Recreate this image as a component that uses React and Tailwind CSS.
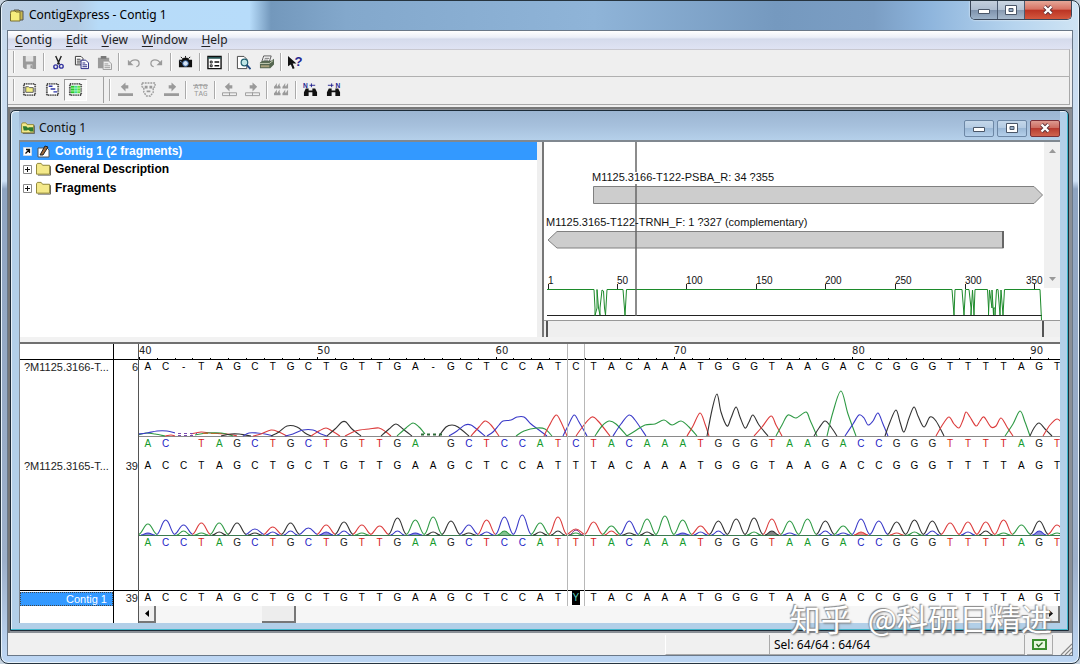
import React from "react";

const TAIL = "TACAAATGGGTAAGACCGGGTTTTAGT";
const READ_1 = "AC-TAGCTGCTGTTGA-GCTCCATC" + TAIL;
const READ_2 = "ACCTAGCTGCTGTTGAAGCTCCATT" + TAIL;
const CONSENSUS = "ACCTAGCTGCTGTTGAAGCTCCATY" + TAIL;

const STROKE = { A: "#2f9a45", C: "#3a3ac8", G: "#333333", T: "#dc3c3c" };
const TEXT_COLOR = {
  A: "text-[#149a2c]",
  C: "text-[#2222c4]",
  G: "text-[#222222]",
  T: "text-[#d42020]",
};

const TRACE_1 = [
  ["A", "139,435 147,433 156,434 166,436"],
  ["C", "139,434 148,433 158,431 168,431 176,433"],
  ["T", "166,436 172,435 176,436"],
  ["T", "192,434 202,432 212,433 228,434 238,436"],
  ["A", "196,435 208,433 222,433 234,436"],
  ["G", "222,436 232,434 240,434 246,435 252,436"],
  ["C", "244,436 250,433 258,433 266,434 274,436"],
  ["T", "254,436 262,434 272,430 280,432 288,436"],
  ["G", "272,436 280,432 288,426 298,427 306,433 312,436"],
  ["C", "286,436 294,434 304,430 314,430 322,434 328,436"],
  ["T", "312,436 320,431 327,428 333,431 341,436"],
  ["G", "328,436 336,429 343,422 347,422 353,429 362,436"],
  ["T", "346,436 354,432 361,430 370,429 380,428 387,432 392,436"],
  ["G", "382,436 390,429 397,424 404,429 413,436"],
  ["A", "398,436 407,428 414,423 420,427 426,434"],
  ["G", "440,436 447,427 453,425 459,427 470,436"],
  ["C", "450,436 458,431 466,425 472,425 480,431 486,436"],
  ["T", "472,436 480,427 486,421 492,425 500,436"],
  ["C", "488,436 494,432 500,425 504,421 512,420 518,417 525,417 532,424 540,430 548,436"],
  ["A", "517,436 525,431 538,428 546,429 553,436"],
  ["T", "545,436 550,426 557,415 562,422 568,436"],
  ["C", "564,436 569,426 575,415 580,422 588,436"],
  ["T", "577,436 585,425 593,417 599,421 611,436"],
  ["A", "596,436 603,426 610,421 617,424 628,436"],
  ["C", "614,436 622,424 630,415 636,420 647,436"],
  ["A", "628,436 636,431 646,425 656,424 665,420 673,425 682,421 690,427 698,436"],
  ["T", "688,436 694,426 701,413 706,424 710,436"],
  ["G", "708,436 713,410 718,394 722,412 728,426 732,418 737,407 741,417 746,428 750,422 754,415 760,425 769,436"],
  ["T", "755,436 763,427 772,416 777,425 783,436"],
  ["A", "777,436 783,425 789,415 797,418 807,412 811,420 818,436"],
  ["G", "815,436 820,428 826,421 832,427 838,436"],
  ["A", "828,436 834,412 842,391 849,414 857,436"],
  ["C", "846,436 854,424 860,415 865,418 869,425 874,421 879,413 884,424 889,436"],
  ["G", "886,436 891,422 897,410 901,422 905,432 910,418 915,407 919,416 925,427 931,417 937,421 945,436"],
  ["T", "937,436 944,424 950,417 955,424 960,428 964,420 967,412 971,417 977,426 981,421 985,417 992,427 997,426 1002,418 1008,427 1014,436"],
  ["A", "1006,436 1014,424 1021,411 1026,422 1031,436"],
  ["G", "1031,436 1035,428 1040,423 1046,429 1053,436"],
  ["T", "1044,436 1051,425 1058,419 1063,423"],
];

const HEIGHTS_2 = [
  11, 15, 10, 12, 12, 12, 6, 8, 12, 7, 10, 13, 10, 9, 17, 15, 18, 14, 10, 15, 18, 20, 12, 18, 6, 13,
  9, 14, 16, 19, 15, 9, 14, 16, 17, 16, 14, 16, 14, 9, 16, 14, 13, 15, 14, 12, 13, 13, 15, 10, 14, 10,
];

function smooth(text) {
  const p = text.split(" ").map((s) => s.split(",").map(Number));
  let d = `M${p[0][0]} ${p[0][1]}`;
  for (let i = 0; i < p.length - 1; i++) {
    const a = p[i - 1] || p[i];
    const b = p[i];
    const c = p[i + 1];
    const e = p[i + 2] || c;
    d += `C${b[0] + (c[0] - a[0]) / 6} ${b[1] + (c[1] - a[1]) / 6} ${c[0] - (e[0] - b[0]) / 6} ${c[1] - (e[1] - b[1]) / 6} ${c[0]} ${c[1]}`;
  }
  return d;
}

function bump(x, w, h) {
  return `M${x - w} 62C${x - w / 2} 62 ${x - w / 2} ${62 - h} ${x} ${62 - h}S${x + w / 2} 62 ${x + w} 62`;
}

const cells = "grid w-[927px] grid-cols-[repeat(52,minmax(0,1fr))] text-center";

function Bases({ seq, colored }) {
  return (
    <div className={`${cells} h-[14px] text-[10px] leading-[14px]`}>
      {seq.split("").map((b, i) => (
        <span key={i} className={colored ? TEXT_COLOR[b] : b === "Y" ? "mx-[5px] bg-black text-[#5fd0c0]" : "text-black"}>
          {colored && b === "-" ? "" : b}
        </span>
      ))}
    </div>
  );
}

function TraceOne() {
  return (
    <svg className="block h-[63px] w-[927px]" viewBox="140 374 927 63" fill="none">
      <path d="M139 436.5H1067" stroke="#8a8a8a" />
      {TRACE_1.map(([b, pts], i) => (
        <path key={i} d={smooth(pts)} stroke={STROKE[b]} strokeWidth="1.1" />
      ))}
      <path d="M179 433.5H198M179 435.5H194" stroke="#7a4ab0" strokeDasharray="3 3" />
      <path d="M204 433.5H222" stroke="#b0702a" strokeDasharray="5 3" />
      <path d="M422 434.500H444" stroke="#2f6a3a" strokeWidth="2" strokeDasharray="3 3" />
    </svg>
  );
}

function TraceTwo() {
  const order = ["A", "C", "G", "T"];
  return (
    <svg className="block h-[63px] w-[927px]" viewBox="0 0 927 63" fill="none">
      <path d="M0 62.500H927" stroke="#3c7a50" />
      {HEIGHTS_2.map((h, i) => {
        const x = ((i + 0.5) * 927) / 52;
        const base = READ_2[i];
        const other = order[(order.indexOf(base) + 1 + (i % 3)) % 4];
        return (
          <g key={i} strokeWidth="1.100">
            {i % 4 !== 1 && <path d={bump(x, 7, 2 + (i % 3))} stroke={STROKE[other]} fill={i % 5 === 0 ? STROKE[other] : "none"} fillOpacity="0.6" />}
            <path d={`M${x - 9} 61.500C${x - 5} 60 ${x - 4} ${62 - h} ${x} ${62 - h}S${x + 5} 60 ${x + 9} 61.500`} stroke={STROKE[base]} />
          </g>
        );
      })}
      <path d={bump(437, 7, 5)} stroke="#8a2a80" />
    </svg>
  );
}

function Ruler() {
  return (
    <div className={`${cells} h-4`}>
      {READ_1.split("").map((_, i) => (
        <div key={i} className="flex h-4 flex-col justify-between text-left font-['DejaVu_Sans',sans-serif] text-[10px] leading-[13px] text-[#222]">
          <span className="h-[13px] w-4">{i % 10 === 0 ? 40 + i : ""}</span>
          <span className={i % 10 === 0 ? "h-[3px] w-px bg-black" : "h-[2px] w-px bg-black"} />
        </div>
      ))}
    </div>
  );
}

function Overview() {
  const dips = "M547 289.500H594L595 308V315.500L597 308V289.500L598.500 308L600 315V308L602 290L603.500 291L604.500 308L605.500 315L607 289.500H623L625 315.500L626.500 289.500H952L954 315L955 289.500H962L964 315L965.500 289.500H969L971 308V315L972.500 290L974 315L975 289.500H987.500L988.500 308V315L989.500 290L992 308V290L993.500 315V308L995 308V315L996.500 289.500H998L1000 315L1001 290L1003 315L1004.500 289.500H1040L1041.500 320";
  const ticks = [[548, "1"], [617, "50"], [686, "100"], [756, "150"], [825, "200"], [895, "250"], [965, "300"], [1034, "350"]];
  return (
    <svg className="block h-[178px] w-[499px] shrink-0" viewBox="544 142 499 178" fill="none" fontFamily='"Liberation Sans", Arial, sans-serif' fontSize="10">
      <path d="M547 315.500H1042" stroke="#222" />
      <path d={dips} stroke="#1c8a2a" />
      <path d="M593.500 186.500H1034L1042.500 195L1034 203.500H593.500Z" fill="#cdcdcd" stroke="#808080" />
      <path d="M548 240L557 231.500H1003.500V248H557Z" fill="#cdcdcd" stroke="#808080" />
      <path d="M1003 231V248" stroke="#666" strokeWidth="2" />
      <path d="M636 142V172M636 184V316" stroke="#666" strokeWidth="1.500" />
      <g fill="#111">
        <text x="592" y="181" fontSize="11">M1125.3166-T122-PSBA_R: 34 ?355</text>
        <text x="546" y="226" fontSize="11">M1125.3165-T122-TRNH_F: 1 ?327 (complementary)</text>
        {ticks.map(([x, t]) => (
          <text key={t} x={t === "350" ? 1026 : x} y="284">{t}</text>
        ))}
      </g>
      {ticks.map(([x]) => (
        <path key={x} d={`M${x + 0.5} 284V289`} stroke="#222" />
      ))}
    </svg>
  );
}

const G = "#9a9a9a";
const ICONS = {
  save: <><path d="M1 1h14v14H3l-2-2z" fill={G} /><path d="M4 1h8v6H4zM5 10h6v5H5z" fill="#e4e4e4" /><path d="M9 11h2v3H9z" fill={G} /></>,
  cut: <><path d="M5 1l4 9M11 1L7 10" stroke="#222" strokeWidth="1.500" /><circle cx="5" cy="12.500" r="2" stroke="#3434a0" strokeWidth="1.500" /><circle cx="11" cy="12" r="2" stroke="#3434a0" strokeWidth="1.500" /></>,
  copy: <><path d="M1.500 1.500h6l2 2v7h-8z" fill="#fff" stroke="#333" /><path d="M3 4.500h4M3 6.500h5M3 8.500h4" stroke="#333" /><path d="M7.500 5.500h5l3 3v6h-8z" fill="#fff" stroke="#202080" /><path d="M9 8.500h3M9 10.500h5M9 12.500h5" stroke="#202080" /></>,
  paste: <><path d="M1 3h12v11H1z" fill={G} /><path d="M4 1h6v3H4z" fill="#777" /><path d="M6.500 6.500h6l3 3v6h-9z" fill="#eee" stroke={G} /><path d="M8 9.500h4M8 11.500h6M8 13.500h6" stroke={G} /></>,
  undo: <><path d="M4 9C6 4 14 4 14 9c0 2-1 3-3 3.500" stroke={G} strokeWidth="1.300" /><path d="M2 5v6h6z" fill={G} /></>,
  redo: <><path d="M12 9C10 4 2 4 2 9c0 2 1 3 3 3.500" stroke={G} strokeWidth="1.300" /><path d="M14 5v6H8z" fill={G} /></>,
  camera: <><path d="M1 5h3l2-2h4l2 2h3v8H1z" fill="#111" /><path d="M3 2l2 2M8 1v2M13 2l-2 2" stroke="#111" /><circle cx="8" cy="9" r="3" fill="#d6e4f4" stroke="#3060a0" /><path d="M2 6l2 2" stroke="#88aadd" /></>,
  props: <><path d="M1 1.500h14v13H1z" fill="#fff" stroke="#111" strokeWidth="1.500" /><path d="M1 2h14v2H1z" fill="#2a5555" /><path d="M3.500 6.500h2v2h-2zM3.500 10.500h2v2h-2z" stroke="#111" /><path d="M8 7.500h5M8 11.500h5" stroke="#111" strokeWidth="1.500" /></>,
  preview: <><path d="M1.500 1.500h7l3 3v10h-10z" fill="#fff" stroke="#444" /><circle cx="9" cy="8" r="3.500" fill="#bfe6e6" stroke="#226070" strokeWidth="1.300" /><path d="M11.500 10.500l4 4.500" stroke="#204a80" strokeWidth="2" /></>,
  print: <><path d="M5 1h8l-2 6H3z" fill="#fff" stroke="#555" /><path d="M6 3.500h5M5 5.500h5" stroke="#666" /><path d="M1 8l3-2h9l3-2v6l-4 4H1z" fill="#556650" /><path d="M1 9h10l4-3" stroke="#c8d0b8" /><path d="M2 12h9" stroke="#a7a07a" strokeWidth="2" /></>,
  help: <><path d="M0 1v11l3-2 2 5 2-1-2-5h4z" fill="#111" /><text x="7" y="12" fontFamily="Liberation Sans, sans-serif" fontSize="14" fontWeight="700" fill="#252590">?</text></>,
  viewA: <><path d="M2 2h12v12H2z" fill="#fff" stroke="#222" strokeWidth="2" strokeDasharray="1 1" /><path d="M4 5h3l1 1h4v5H4z" fill="#f3ef80" stroke="#555" /></>,
  viewB: <><path d="M2 2h12v12H2z" fill="#fff" stroke="#222" strokeWidth="2" strokeDasharray="1 1" /><path d="M4 4.500h4M6 7.500h5M9 10.500h4" stroke="#2c35a8" strokeWidth="1.500" /></>,
  viewC: <><path d="M2 2h12v12H2z" fill="#fff" stroke="#222" strokeWidth="2" strokeDasharray="1 1" /><path d="M3 4h4v8H3z" fill="#28c828" /><path d="M7 4h3v8H7z" fill="#40d8a0" /><path d="M10 4h3v8h-3z" fill="#60e040" /><path d="M3 6.500h10M3 9.500h10" stroke="#b8ffb8" /></>,
  left: <><path d="M0 12h16v3H0z" fill={G} /><path d="M3 5l5-4.500v3h3v3.500H8v3z" fill={G} /></>,
  mask: <><path d="M1 1h14v4l-2 1v5l-3 4H6l-3-4V6L1 5z" stroke={G} strokeWidth="1.500" strokeDasharray="2 1" /><path d="M4 4h3v3H4zM9 4h3v3H9zM6 9h4v2H6z" fill={G} /></>,
  right: <><path d="M0 12h16v3H0z" fill={G} /><path d="M13 5L8 .5v3H5V7h3v3z" fill={G} /></>,
  tag: <g fill={G} fontFamily="Liberation Mono, monospace" fontSize="8"><path d="M0 3.500h16" stroke={G} /><text x="1" y="7">ATG</text><text x="1" y="15">TAG</text></g>,
  leftBox: <><path d="M.5 11.500h15v3H.5zM8 11v4" stroke={G} /><path d="M3 5l5-4.500v3h3v3.500H8v3z" fill={G} /></>,
  rightBox: <><path d="M.5 11.500h15v3H.5zM8 11v4" stroke={G} /><path d="M13 5L8 .5v3H5V7h3v3z" fill={G} /></>,
  peaks: <path d="M0 7V5l1-1 2-3v3l1 1V4l2-3v3l1 1v2zM9 7V5l1-1 2-3v3l1 1V4l2-3v6zM0 14v-2l1-1 2-3v3l1 1v-1l2-3v3l1 1v2zM9 14v-2l1-1 2-3v3l1 1v-1l2-3v6z" fill={G} />,
  findPrev: <><path d="M1 15V11l2-4h3v2h4V7h3l2 4v4h-5v-4H6v4z" fill="#111" /><text x="0" y="6" fontFamily="Liberation Sans, sans-serif" fontSize="7" fontWeight="700" fill="#252590">N</text><path d="M7 3.500h6M9 1.500v4" stroke="#252590" /></>,
  findNext: <><path d="M1 15V11l2-4h3v2h4V7h3l2 4v4h-5v-4H6v4z" fill="#111" /><text x="10" y="6" fontFamily="Liberation Sans, sans-serif" fontSize="7" fontWeight="700" fill="#252590">N</text><path d="M2 3.500h6M6 1.500v4" stroke="#252590" /></>,
};

function Tool({ name, label, pressed }) {
  return (
    <button
      type="button"
      aria-label={label}
      className={
        pressed
          ? "flex h-[22px] w-[23px] shrink-0 items-center justify-center border border-r-white border-b-white border-t-[#999] border-l-[#999] bg-[#f8f8f8]"
          : "flex h-[22px] w-[23px] shrink-0 items-center justify-center"
      }
    >
      <svg className="h-[15px] w-[15px]" viewBox="0 0 16 16" fill="none">{ICONS[name]}</svg>
    </button>
  );
}

const Sep = () => <span className="mx-[2px] h-[18px] w-[2px] shrink-0 border-r border-r-white bg-[#aaa]" />;
const Grip = () => <span className="mr-[3px] ml-[5px] h-[22px] w-[2px] shrink-0 border-r border-r-white bg-[#a8a8a8]" />;

const MIN = <svg className="h-[6px] w-3" viewBox="0 0 12 6"><path d="M.5.5h11v4H.5z" fill="#fff" stroke="#4a5668" /></svg>;
const MAX = <svg className="h-[10px] w-3" viewBox="0 0 12 10"><path d="M.5.5h11v9H.5z" fill="#fff" stroke="#4a5668" /><path d="M4 3.500h4v3H4z" fill="#9ab0c8" stroke="#4a5668" /></svg>;
const CLOSE = <svg className="h-[10px] w-3" viewBox="0 0 12 10"><path d="M2.500 1.500l7 7M9.500 1.500l-7 7" stroke="#5a3038" strokeWidth="4" /><path d="M2.500 1.500l7 7M9.500 1.500l-7 7" stroke="#fff" strokeWidth="2.400" /></svg>;

function Folder({ className, letter }) {
  return (
    <svg className={className} viewBox="0 0 16 14">
      <path d="M2 13.500h13.500V4" fill="none" stroke="#555" />
      <path d="M.5 12.500v-10l1-1.500h4l1.500 2h7.500v9.500z" fill="#f4e98a" stroke="#8a8030" />
      {letter && <path d="M2 5h4l2 2 1-1h5v5h-3l-3-2-1 1H3z" fill="#2c7a30" />}
    </svg>
  );
}

function Plus({ selected }) {
  return (
    <svg className="h-[9px] w-[9px]" viewBox="0 0 9 9">
      <path d="M.5.5h8v8h-8z" fill="#fff" stroke={selected ? "#c8d8e8" : "#888"} />
      {selected ? <path d="M2.500 6.500L6 3M3 2.500h3.500V6" fill="none" stroke="#111" strokeWidth="1.300" /> : <path d="M2 4.500h5M4.500 2v5" stroke="#111" />}
    </svg>
  );
}

export default function App() {
  return (
    <div className="h-screen bg-[#c8d4e0] font-['Liberation_Sans',Arial,sans-serif] text-black">
      <div className="relative flex h-full flex-col overflow-hidden rounded-lg border border-[#26343f] bg-[linear-gradient(180deg,#c6d8ea_0px,#cfe2f6_180px,#8fa5c2_188px,#9db0ca_560px,#bcd4f0_650px,#bcd6f4_100%)] px-[6px] shadow-[inset_0_0_0_1px_#e8f2fa]">
        <header className="-mx-[5px] flex h-[29px] shrink-0 items-start rounded-t-lg bg-[linear-gradient(90deg,#b9cde2_0%,#b4cce4_7%,#b7dbf8_9%,#b7dcfa_23%,#7398bc_25%,#83a8cc_32%,#8fb4d8_55%,#7599bf_72%,#7b9ec4_81%,#8db4dc_86%,#b6d4ee_94%,#cfe4f4_100%)] pr-[6px] pl-[8px]">
          <div className="flex h-[28px] items-center gap-[5px]">
            <svg className="h-[13px] w-[14px]" viewBox="0 0 14 13"><path d="M4 1h5l1 1h3v9H5z" fill="#c8b850" stroke="#555" /><path d="M.5 4.500V12h9.500V3H6L5 2H1z" fill="#f6ee7c" stroke="#7a7030" /></svg>
            <h1 className="font-['Noto_Sans',sans-serif] text-[12px] whitespace-nowrap text-black">ContigExpress - Contig 1</h1>
          </div>
          <div className="ml-auto flex h-[19px] overflow-hidden rounded-b-[5px] border border-t-0 border-[#3a4658] shadow-[0_0_2px_#fff]">
            <button type="button" aria-label="Minimize" className="flex w-[27px] items-center justify-center border-r border-[#4a5a70] bg-[linear-gradient(180deg,#c3cfdd_0%,#aebdd0_48%,#7e92ac_50%,#9db2c9_100%)] pt-1">{MIN}</button>
            <button type="button" aria-label="Maximize" className="flex w-[27px] items-center justify-center border-r border-[#4a5a70] bg-[linear-gradient(180deg,#cbd6e2_0%,#b4c3d4_48%,#8799b0_50%,#a8bacd_100%)]">{MAX}</button>
            <button type="button" aria-label="Close" className="flex w-[46px] items-center justify-center bg-[linear-gradient(180deg,#e5a798_0%,#d77263_46%,#bb3323_50%,#d4583e_100%)]">{CLOSE}</button>
          </div>
        </header>

        <div className="flex min-h-0 flex-1 flex-col border border-[#6a7888] bg-[#efefef]">
          <nav className="flex h-[18px] shrink-0 items-center gap-[14px] bg-[linear-gradient(180deg,#ffffff_0%,#eceff8_35%,#d5dbec_45%,#dfe3f3_100%)] pl-[7px] font-['Noto_Sans',sans-serif] text-[12px] leading-[16px] text-[#222]">
            {["Contig", "Edit", "View", "Window", "Help"].map((m) => (
              <button key={m} type="button"><span className="underline underline-offset-2">{m[0]}</span>{m.slice(1)}</button>
            ))}
          </nav>

          <div className="mr-[2px] flex h-[28px] shrink-0 items-center border-t border-r border-b border-[#b0b0b0] border-t-[#c8c8d0] pb-[2px]" role="toolbar" aria-label="Standard">
            <Grip />
            <Tool name="save" label="Save" /><Sep />
            <Tool name="cut" label="Cut" /><Tool name="copy" label="Copy" /><Tool name="paste" label="Paste" /><Sep />
            <Tool name="undo" label="Undo" /><Tool name="redo" label="Redo" /><Sep />
            <Tool name="camera" label="Snapshot" /><Sep />
            <Tool name="props" label="Properties" /><Sep />
            <Tool name="preview" label="Print preview" /><Tool name="print" label="Print" /><Sep />
            <Tool name="help" label="Context help" />
          </div>
          <div className="mr-[2px] flex h-[28px] shrink-0 items-center border-r border-b border-[#a8a8a8] pb-[2px]" role="toolbar" aria-label="Contig">
            <Grip />
            <Tool name="viewA" label="Description pane" /><Tool name="viewB" label="Graphics pane" /><Tool name="viewC" label="Alignment pane" pressed />
            <span className="ml-4 h-[26px] w-px shrink-0 bg-[#a0a0a0]" />
            <Grip />
            <Tool name="left" label="Trim left" /><Tool name="mask" label="Mask" /><Tool name="right" label="Trim right" /><Sep />
            <Tool name="tag" label="Translate" /><Sep />
            <Tool name="leftBox" label="Shift left" /><Tool name="rightBox" label="Shift right" /><Sep />
            <Tool name="peaks" label="Chromatogram" /><Sep />
            <Tool name="findPrev" label="Previous ambiguity" /><Tool name="findNext" label="Next ambiguity" />
          </div>

          <main className="mt-[2px] flex min-h-0 flex-1 flex-col border-t-2 border-l-2 border-[#777] bg-[#8a8f96] pt-px pr-[3px] pb-[2px]">
            <section className="flex min-h-0 flex-1 flex-col rounded-t-[5px] border border-[#1d2b38] bg-[#b2cfe8] px-[8px] pb-[7px] shadow-[inset_-1px_-1px_0_#3fb7cc,inset_1px_1px_0_#e6f0f8]">
              <header className="flex h-[29px] shrink-0 items-center bg-[linear-gradient(180deg,#9cb5d2_0%,#a6c0dc_50%,#b5d0ea_100%)] pt-[5px] pl-[2px]">
                <Folder letter className="h-3 w-[14px]" />
                <h2 className="ml-1 font-['Noto_Sans',sans-serif] text-[12px] text-[#111]">Contig 1</h2>
                <div className="ml-auto flex gap-[3px]">
                  <button type="button" aria-label="Minimize" className="flex h-[17px] w-[30px] items-center justify-center rounded-[2px] border border-[#6d87a5] bg-[linear-gradient(180deg,#c4d7ea_0%,#b3cae2_48%,#9bb8d6_50%,#b4cfea_100%)] pt-1">{MIN}</button>
                  <button type="button" aria-label="Maximize" className="flex h-[17px] w-[30px] items-center justify-center rounded-[2px] border border-[#6d87a5] bg-[linear-gradient(180deg,#c4d7ea_0%,#b3cae2_48%,#9bb8d6_50%,#b4cfea_100%)]">{MAX}</button>
                  <button type="button" aria-label="Close" className="flex h-[17px] w-[30px] items-center justify-center rounded-[2px] border border-[#7a3038] bg-[linear-gradient(180deg,#dd9a90_0%,#cc6a5e_48%,#b83c30_50%,#cf6450_100%)]">{CLOSE}</button>
                </div>
              </header>

              <div className="flex min-h-0 flex-1 flex-col border-t-2 border-l border-[#808890] bg-white">
                <div className="grid h-[195px] shrink-0 grid-cols-[minmax(0,517fr)_5px_minmax(0,518fr)]">
                  <ul className="overflow-hidden text-[12px] font-bold">
                    <li className="flex h-[18px] items-center gap-[4px] bg-[#3399ff] pl-[3px] text-white">
                      <Plus selected />
                      <svg className="h-[14px] w-[15px]" viewBox="0 0 13 14"><path d="M1 4h9l2 2v7H1z" fill="#fff" stroke="#555" /><path d="M3 11l5-9 3 1-5 8z" fill="#a06a3a" stroke="#222" /></svg>
                      <span>Contig 1 (2 fragments)</span>
                    </li>
                    <li className="flex h-[18px] items-center gap-[4px] pl-[3px]"><Plus /><Folder className="h-[14px] w-[15px]" /><span>General Description</span></li>
                    <li className="flex h-[20px] items-center gap-[4px] pl-[3px]"><Plus /><Folder className="h-[14px] w-[15px]" /><span>Fragments</span></li>
                  </ul>
                  <div className="bg-[#efefef]" />
                  <div className="flex min-w-0 flex-col border-l-2 border-[#777]">
                    <div className="flex h-[178px] justify-between">
                      <Overview />
                      <div className="flex h-[146px] w-4 shrink-0 flex-col items-center justify-between bg-[#f0f0f0] py-[7px]">
                        <svg className="h-1 w-[7px]" viewBox="0 0 7 4"><path d="M0 4L3.500 0 7 4z" fill="#999" /></svg>
                        <svg className="h-1 w-[7px]" viewBox="0 0 7 4"><path d="M0 0L3.500 4 7 0z" fill="#999" /></svg>
                      </div>
                    </div>
                    <div className="flex h-[17px] border-t border-[#999] bg-[#efefef] pr-4 pl-[2px]">
                      <div className="flex-1 border-x-2 border-[#555]" />
                    </div>
                  </div>
                </div>
                <div className="h-[5px] shrink-0 bg-[#f2f2f2]" />

                <div className="flex min-h-0 flex-1 border-t-2 border-[#707070] text-[12px]">
                  <div className="flex w-[94px] shrink-0 flex-col border-r border-black">
                    <div className="h-[16px] shrink-0 border-b border-black" />
                    <div className="h-[99px] shrink-0 pl-1 text-[11px] leading-[14px] whitespace-nowrap text-[#222]">?M1125.3166-T...</div>
                    <div className="min-h-0 flex-1 border-b border-black pl-1 text-[11px] leading-[14px] whitespace-nowrap text-[#222]">?M1125.3165-T...</div>
                    <div className="mt-px h-[14px] shrink-0 border border-dotted border-[#444] bg-[#3399ff] pr-[5px] text-right text-[11px] leading-[12px] text-white">Contig 1</div>
                    <div className="h-[17px] shrink-0" />
                  </div>
                  <div className="flex w-[25px] shrink-0 flex-col border-r border-[#555] text-right text-[11px] leading-[14px] text-[#222]">
                    <div className="h-[16px] shrink-0 border-b border-black" />
                    <div className="h-[99px] shrink-0">6</div>
                    <div className="min-h-0 flex-1 border-b border-black">39</div>
                    <div className="h-[15px] shrink-0">39</div>
                    <div className="h-[17px] shrink-0" />
                  </div>
                  <div className="relative flex min-w-0 flex-1 flex-col overflow-hidden">
                    <div className="h-[16px] shrink-0 overflow-hidden border-b border-black"><Ruler /></div>
                    <div className="h-[99px] shrink-0 overflow-hidden"><Bases seq={READ_1} /><TraceOne /><Bases seq={READ_1} colored /></div>
                    <div className="min-h-0 flex-1 overflow-hidden border-b border-black"><Bases seq={READ_2} /><TraceTwo /><Bases seq={READ_2} colored /></div>
                    <div className="h-[15px] shrink-0 overflow-hidden"><Bases seq={CONSENSUS} /></div>
                    <div className="flex h-[17px] shrink-0 justify-between bg-[#f6f6f6]">
                      <button type="button" aria-label="Scroll left" className="flex w-[17px] items-center justify-center border-r-2 border-b-2 border-[#777] bg-[#efefef]"><svg className="h-[7px] w-1" viewBox="0 0 4 7"><path d="M4 0v7L0 3.500z" /></svg></button>
                      <div className="flex-1"><div className="ml-[12%] h-[17px] w-[34px] border-r-2 border-b-2 border-[#777] bg-[#ededed]" /></div>
                      <button type="button" aria-label="Scroll right" className="flex w-[17px] items-center justify-center border-r-2 border-b-2 border-[#777] bg-[#efefef]"><svg className="h-[7px] w-1" viewBox="0 0 4 7"><path d="M0 0v7l4-3.500z" /></svg></button>
                    </div>
                    <div className="pointer-events-none absolute top-0 bottom-[17px] left-[428px] w-[18px] border-x border-[#b8b8b8]" />
                  </div>
                </div>
              </div>
            </section>
          </main>

          <footer className="flex h-[22px] shrink-0 items-stretch bg-[#f0f0f0] pt-[2px] font-['Noto_Sans',sans-serif] text-[12px] leading-[20px]">
            <div className="flex-1" />
            <div className="w-[105px] border-r border-b border-l border-[#aaa] border-l-white" />
            <div className="w-[255px] border-r border-b border-[#aaa] pl-1">Sel: 64/64 : 64/64</div>
            <div className="ml-[2px] flex w-[26px] items-center justify-center border-r border-b border-[#aaa]">
              <svg className="h-[11px] w-[15px]" viewBox="0 0 15 11"><path d="M1 1h13v9H1z" fill="#e8f8e0" stroke="#3c9030" strokeWidth="2" /><path d="M4.500 5l2 2.500L10.500 3.500" fill="none" stroke="#2a7020" strokeWidth="1.300" /></svg>
            </div>
            <div className="flex w-[19px] items-end justify-end">
              <svg className="h-3 w-3" viewBox="0 0 12 12"><path d="M1 12L12 1M5 12l7-7M9 12l3-3" stroke="#888" strokeWidth="1.200" /></svg>
            </div>
          </footer>
        </div>
        <div className="h-[7px] shrink-0" />
        <div className="pointer-events-none absolute right-[27px] bottom-[30px] flex gap-4 font-['Noto_Sans_CJK_SC',sans-serif] text-[31px] leading-[30px] whitespace-nowrap text-white [text-shadow:-1px_-1px_1px_#888,1px_1px_2px_#777]">
          <span>知乎</span>
          <span>@科研日精进</span>
        </div>
      </div>
    </div>
  );
}
